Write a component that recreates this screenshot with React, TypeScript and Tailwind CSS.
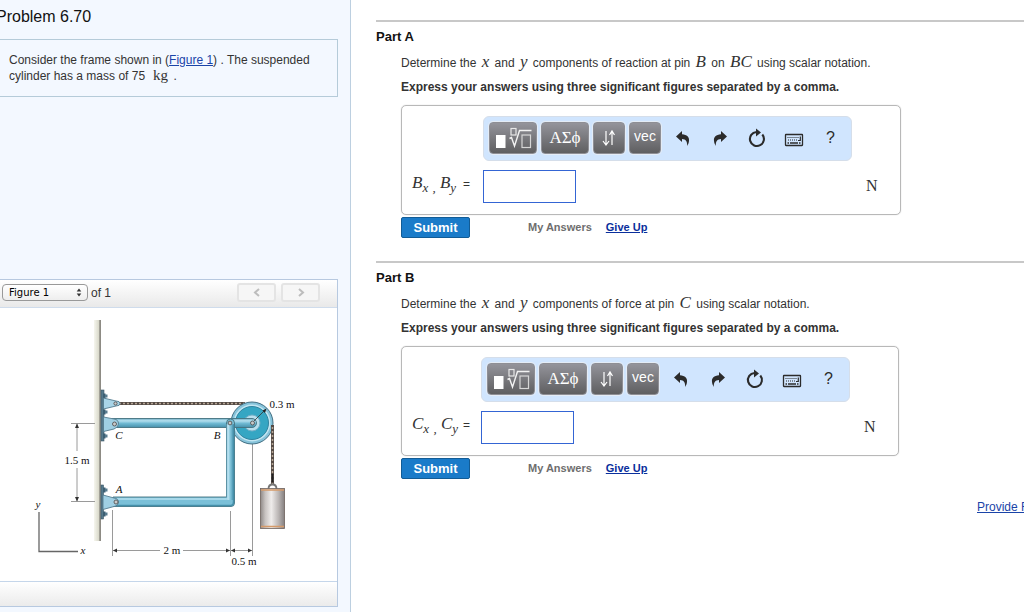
import type { ReactNode } from "react";

function MathText({ children }: { children: ReactNode }) {
  return <i className="font-['Liberation_Serif',serif] text-[17px] leading-none text-[#333]">{children}</i>;
}

function Variable({ children }: { children: ReactNode }) {
  return <span className="mx-[2px]"><MathText>{children}</MathText></span>;
}

function Sub({ children }: { children: ReactNode }) {
  return <sub className="bottom-[-4px] text-[13px] leading-none">{children}</sub>;
}

function TemplateIcon() {
  return (
    <svg width="40" height="26" viewBox="0 0 40 26" fill="none" aria-hidden="true">
      <rect x="3" y="10" width="9.5" height="13" fill="#fff" />
      <rect x="18" y="3.5" width="5" height="6.5" stroke="#e8e8e8" strokeWidth="1.2" />
      <path d="M16.5 13.5l2-1 3 8.5L26.500 5.500H38.500" stroke="#f2f2f2" strokeWidth="1.4" />
      <rect x="29" y="10" width="8.5" height="12.500" stroke="#d6d6d6" strokeWidth="1.2" />
    </svg>
  );
}

function ArrowsIcon() {
  return (
    <svg width="14" height="18" viewBox="0 0 14 18" fill="none" stroke="#fff" strokeWidth="1.200" aria-hidden="true">
      <path d="M4 2v13.500M1 12l3 4 3-4M10 16V2.500M7.500 6L10 2l2.500 4" />
    </svg>
  );
}

function UndoIcon() {
  return (
    <svg width="14" height="15" viewBox="0 0 14 15" fill="#2b2b2b" aria-hidden="true">
      <path d="M0 5.500L6 0V3.200C11 3.500 13.500 6 13 10C12.800 12 12 13.500 11.200 15C11.300 10.500 10 8.200 6 8V11Z" />
    </svg>
  );
}

function RedoIcon() {
  return (
    <svg width="14" height="15" viewBox="0 0 14 15" fill="#2b2b2b" aria-hidden="true">
      <path d="M14 5.500L8 0V3.200C3 3.500 .5 6 1 10C1.200 12 2 13.500 2.800 15C2.700 10.500 4 8.200 8 8V11Z" />
    </svg>
  );
}

function ResetIcon() {
  return (
    <svg width="18" height="20" viewBox="0 0 18 20" fill="none" aria-hidden="true">
      <path d="M14.300 6.500A7 7 0 1 1 8.500 4" stroke="#2b2b2b" strokeWidth="2.100" />
      <path d="M8 0.500L13 4.500L8 8.500Z" fill="#2b2b2b" />
    </svg>
  );
}

function KeyboardIcon() {
  return (
    <svg width="20" height="14" viewBox="0 0 20 14" fill="none" stroke="#2b2b2b" aria-hidden="true">
      <rect x="1.500" y="1.500" width="17" height="11" rx=".5" strokeWidth="1.300" />
      <path d="M3.500 4.500H14.500" strokeDasharray="1 1" strokeWidth="1.200" />
      <path d="M4 7H13" strokeDasharray="1 1" strokeWidth="1.200" />
      <path d="M16.300 3.500V7.500H14" strokeWidth="1.200" />
      <path d="M3.500 10h1.500M6 10h8M15 10h1.500" strokeWidth="1.500" />
    </svg>
  );
}

const key =
  "flex h-8 items-center justify-center rounded border border-[#8f8f95] bg-linear-to-b from-[#94949b] to-[#5f5f61] text-white shadow-[0_0_0_1px_#e4ecf6]";
const tool = "flex h-8 w-[37px] items-center justify-center text-[#2b2b2b]";

function Toolbar() {
  return (
    <div className="flex h-[45px] items-center rounded-md border border-[#d5deea] bg-[#d0e5fe] pb-px pl-[5px]">
      <div className="flex gap-1">
        <button type="button" aria-label="Templates" className={`${key} w-12`}><TemplateIcon /></button>
        <button type="button" className={`${key} w-12 font-['Liberation_Serif',serif] text-[17px]`}>ΑΣϕ</button>
        <button type="button" aria-label="Subscripts" className={`${key} w-8`}><ArrowsIcon /></button>
        <button type="button" className={`${key} w-8 pb-1 text-sm`}>vec</button>
      </div>
      <div className="flex pl-[3px]">
        <button type="button" aria-label="Undo" className={tool}><UndoIcon /></button>
        <button type="button" aria-label="Redo" className={tool}><RedoIcon /></button>
        <button type="button" aria-label="Reset" className={tool}><ResetIcon /></button>
        <button type="button" aria-label="Keyboard" className={`${tool} pt-1`}><KeyboardIcon /></button>
        <button type="button" className={`${tool} text-base`}>?</button>
      </div>
    </div>
  );
}

interface PartProps {
  id: string;
  title: string;
  prompt: ReactNode;
  label: ReactNode;
  labelWidth: string;
}

function Part({ id, title, prompt, label, labelWidth }: PartProps) {
  return (
    <section className="border-t-2 border-[#c8c8c8] pt-[6px]">
      <h2 className="text-[13px] leading-[18px] font-bold text-[#111]">{title}</h2>
      <div className="pl-[25px]">
        <p className="mt-[7px] h-[18px] leading-[18px] whitespace-nowrap">{prompt}</p>
        <p className="mt-[7px] leading-[18px] font-bold whitespace-nowrap">
          Express your answers using three significant figures separated by a comma.
        </p>
        <div className="mt-[9px] flex w-fit rounded-[5px] border border-[#b8b8b8] pt-[10px] pr-[23px] pb-[11px] pl-[10px] shadow-[0_0_1px_#bbb]">
          <label htmlFor={id} className={`mt-[54px] h-[32px] shrink-0 leading-[28px] whitespace-nowrap ${labelWidth}`}>
            {label}
          </label>
          <div className="w-[369px]">
            <Toolbar />
            <input id={id} type="text" className="mt-[9px] block h-[33px] w-[93px] border border-solid border-[#3465d4] bg-white px-1 outline-hidden" />
          </div>
          <span className="mt-[58px] -ml-[1px] w-[26px] pl-[15px] font-['Liberation_Serif',serif] text-base leading-[24px]">N</span>
        </div>
        <div className="mt-[2px] flex items-center leading-[21px] font-bold">
          <button type="button" className="h-[21px] w-[69px] rounded-[2px] border border-[#125c96] bg-[#1a7bc9] text-[13px] leading-[19px] text-white">
            Submit
          </button>
          <span className="ml-[58px] text-[11px] text-[#6e6e6e]">My Answers</span>
          <a href="#give-up" className="ml-[14px] text-[11px] text-[#0a2f9c] underline">Give Up</a>
        </div>
      </div>
    </section>
  );
}

function Bolt({ x, y }: { x: number; y: number }) {
  return (
    <g>
      <rect x={x} y={y - 2.5} width="2.500" height="5" fill="#3d5f73" />
      <rect x={x + 2} y={y - 1.5} width="2.500" height="3" fill="#587b8e" />
    </g>
  );
}

function FrameDrawing() {
  return (
    <svg viewBox="0 308 337 273" className="block h-[273px] w-[337px]" role="img" aria-label="Frame with pulley and suspended cylinder">
      <defs>
        <linearGradient id="wall"><stop offset="0" stopColor="#f6f6ee" /><stop offset=".75" stopColor="#d7d7c8" /><stop offset=".8" stopColor="#8d8b84" /><stop offset="1" stopColor="#8d8b84" /></linearGradient>
        <linearGradient id="beam" x2="0" y2="1"><stop offset="0" stopColor="#6aa9c0" /><stop offset=".25" stopColor="#b5e0ef" /><stop offset=".55" stopColor="#6fb9d2" /><stop offset="1" stopColor="#468fab" /></linearGradient>
        <linearGradient id="post"><stop offset="0" stopColor="#6aa9c0" /><stop offset=".25" stopColor="#b5e0ef" /><stop offset=".55" stopColor="#7cc0d7" /><stop offset="1" stopColor="#468fab" /></linearGradient>
        <linearGradient id="steel"><stop offset="0" stopColor="#908a88" /><stop offset=".2" stopColor="#c8c3c1" /><stop offset=".45" stopColor="#efeceb" /><stop offset=".75" stopColor="#bab5b4" /><stop offset="1" stopColor="#858080" /></linearGradient>
      </defs>
      <rect x="94" y="320" width="7" height="221" fill="url(#wall)" />

      <g stroke="#9a9a9a" strokeWidth="1">
        <path d="M71 423.500H95M71 501.500H95M77 424V451M77 468V501M112.500 510V556M230.500 511V556M252.500 424V556M113 550.500H160M183 550.500H252" />
      </g>
      <g fill="#333">
        <path d="M75 428L77 423.500L79 428ZM75 497L77 501.500L79 497ZM117 548.500L113 550.500L117 552.500ZM226 548.500L230 550.500L226 552.500ZM235 548.500L231 550.500L235 552.500ZM248 548.500L252 550.500L248 552.500Z" />
      </g>
      <path d="M39 512V551.500H78" fill="none" stroke="#666" strokeWidth="1.300" />

      <path d="M118 403.500H245" stroke="#554b45" strokeWidth="3" />
      <path d="M119 403.500H245" stroke="#b5a595" strokeWidth="1.500" strokeDasharray="2 2" />
      <circle cx="252" cy="423" r="21" fill="#86c3da" stroke="#426f83" />
      <circle cx="252" cy="423" r="18.500" fill="#c2e6f2" />
      <circle cx="252" cy="423" r="16.500" fill="#35a6c3" stroke="#3184a0" />
      <circle cx="252" cy="423" r="8" fill="#b9dfed" stroke="#73aec5" />

      <path d="M112 418.500H252A4.500 4.500 0 0 1 252 427.500H112Z" fill="url(#beam)" stroke="#44727f" strokeWidth=".9" />
      <path d="M113 497H226.500V423A4 4 0 0 1 234.500 423V503Q234.500 506.500 231 506.500H113Z" fill="#7bc0d8" stroke="#44727f" strokeWidth=".9" />
      <rect x="226.500" y="424" width="7.500" height="76" fill="url(#post)" />
      <path d="M115 499H228V425" fill="none" stroke="#b5e0ef" strokeWidth="1.500" />
      <path d="M115 505.500H231Q233.500 505.500 233.500 502V425" fill="none" stroke="#4590aa" strokeWidth="1.500" />

      <rect x="101" y="390" width="3" height="51" fill="#55798c" stroke="#3c5665" strokeWidth=".6" />
      <rect x="101" y="485" width="2.500" height="34" fill="#55798c" stroke="#3c5665" strokeWidth=".6" />
      <Bolt x={103} y={396} /><Bolt x={103} y={412} /><Bolt x={103} y={436} />
      <Bolt x={103} y={490} /><Bolt x={103} y={514} />
      <path d="M103.500 398L116 401Q120 401 120 403.500Q120 406 116 406L103.500 409Z" fill="#a9d5e8" stroke="#557c8e" strokeWidth=".9" />
      <path d="M103.500 417L114 419Q118.500 419.500 118.500 424Q118.500 427 114 429L103.500 431.500Z" fill="#9fcfe3" stroke="#557c8e" strokeWidth=".9" />
      <path d="M103 495L114 498Q118.500 498.500 118.500 502Q118.500 505.500 114 506.500L103 509.500Z" fill="#9fcfe3" stroke="#557c8e" strokeWidth=".9" />
      <g fill="#c9c9c9" stroke="#555" strokeWidth=".9">
        <circle cx="115.500" cy="403.500" r="1.600" /><circle cx="114.500" cy="424" r="2" /><circle cx="116" cy="502" r="2" />
        <circle cx="230" cy="423" r="1.900" /><circle cx="252.500" cy="423" r="2" />
      </g>
      <path d="M254 421L265 410" stroke="#333" strokeWidth=".8" />
      <path d="M266.500 408.500L265 413L262.500 410.500Z" fill="#222" />

      <path d="M272.500 425V485" stroke="#554b45" strokeWidth="3" />
      <path d="M272.500 427V485" stroke="#b5a595" strokeWidth="1.500" strokeDasharray="2 2" />
      <path d="M272.500 474V482" stroke="#222" strokeWidth="2" />
      <path d="M268.500 489Q268.500 484.500 272.500 484.500Q276.500 484.500 276.500 489" fill="none" stroke="#777" strokeWidth="1.800" />
      <rect x="260.500" y="488.500" width="24" height="40" fill="url(#steel)" stroke="#6e625c" strokeWidth=".8" />
      <path d="M261 490H284M261 526.500H284" stroke="#d59a6a" strokeWidth="1.500" />

      <g fill="#111" className="font-['Liberation_Serif',serif] text-[11px]" textAnchor="middle">
        <text x="282" y="408">0.3 m</text>
        <text x="77" y="464">1.5 m</text>
        <text x="172" y="554">2 m</text>
        <text x="244" y="565">0.5 m</text>
        <g fontStyle="italic">
          <text x="119" y="439">C</text><text x="217" y="439">B</text><text x="119" y="493">A</text>
          <text x="38" y="508">y</text><text x="83" y="554">x</text>
        </g>
      </g>
    </svg>
  );
}

const nav =
  "flex h-[19px] w-[39px] items-center justify-center rounded-[3px] border-2 border-[#e4e4e4] bg-[#f6f6f6] text-[#bdbdbd]";

export default function App() {
  return (
    <div className="flex min-h-screen overflow-hidden bg-white font-['Liberation_Sans',Arial,sans-serif] text-xs text-[#333]">
      <aside className="w-[351px] shrink-0 border-r border-[#bccfe0] bg-[#f3f8ff] pr-3">
        <h1 className="-ml-1 pt-[6px] text-base leading-[21px] text-[#111]">Problem 6.70</h1>
        <div className="mt-3 border border-l-0 border-[#b5cbd9] px-[9px] pt-3 pb-[12px]">
          <p className="leading-4">
            Consider the frame shown in (<a href="#figure" className="text-[#1a44a8] underline">Figure 1</a>) . The suspended cylinder has a mass of 75
            <span className="mr-[2px] ml-2 font-['Liberation_Serif',serif] text-[15px] leading-none">kg</span> .
          </p>
        </div>
        <div id="figure" className="mt-[182px] border border-l-0 border-[#b7c9e0] bg-white">
          <div className="flex h-7 items-center border-b border-[#cfdcec] bg-linear-to-b from-white to-[#e9e9e9] pr-[17px] pb-[2px] pl-[2px]">
            <div className="relative">
              <select aria-label="Figure" className="block h-[17px] w-[86px] appearance-none rounded border border-[#999] bg-linear-to-b from-white to-[#eee] px-1.5 font-['DejaVu_Sans',sans-serif] text-[10px] leading-[15px] text-black">
                <option>Figure 1</option>
              </select>
              <svg className="pointer-events-none absolute top-1 right-1.5" width="6" height="9" viewBox="0 0 6 9" fill="#333" aria-hidden="true">
                <path d="M3 0.500L5.300 3.500H.7ZM3 8.500L.7 5.500H5.300Z" />
              </svg>
            </div>
            <span className="ml-[3px]">of 1</span>
            <button type="button" aria-label="Previous figure" className={`${nav} ml-auto`}>
              <svg width="8" height="9" viewBox="0 0 8 9" fill="none" stroke="currentColor" strokeWidth="2" aria-hidden="true"><path d="M6 1L2 4.500L6 8" /></svg>
            </button>
            <button type="button" aria-label="Next figure" className={`${nav} ml-[5px]`}>
              <svg width="8" height="9" viewBox="0 0 8 9" fill="none" stroke="currentColor" strokeWidth="2" aria-hidden="true"><path d="M2 1L6 4.500L2 8" /></svg>
            </button>
          </div>
          <FrameDrawing />
          <div className="h-[25px] border-t border-[#c5d6ea] bg-linear-to-b from-white to-[#ebebeb]" />
        </div>
      </aside>

      <main className="min-w-0 flex-1 pt-5 pl-[25px]">
        <Part
          id="answer-a"
          title="Part A"
          prompt={<>Determine the <Variable>x</Variable> and <Variable>y</Variable> components of reaction at pin <Variable>B</Variable> on <Variable>BC</Variable> using scalar notation.</>}
          label={<><MathText>B<Sub>x</Sub> <Sub>,</Sub> B<Sub>y</Sub></MathText><span className="ml-[7px]">=</span></>}
          labelWidth="w-[71px]"
        />
        <div className="h-[23px]" />
        <Part
          id="answer-b"
          title="Part B"
          prompt={<>Determine the <Variable>x</Variable> and <Variable>y</Variable> components of force at pin <Variable>C</Variable> using scalar notation.</>}
          label={<><MathText>C<Sub>x</Sub> <Sub>,</Sub> C<Sub>y</Sub></MathText><span className="ml-[5px]">=</span></>}
          labelWidth="w-[69px]"
        />
        <p className="mt-[20px] pl-[601px] leading-4 whitespace-nowrap">
          <a href="#feedback" className="text-[#1a44a8] underline">Provide Feedback</a>
        </p>
      </main>
    </div>
  );
}
